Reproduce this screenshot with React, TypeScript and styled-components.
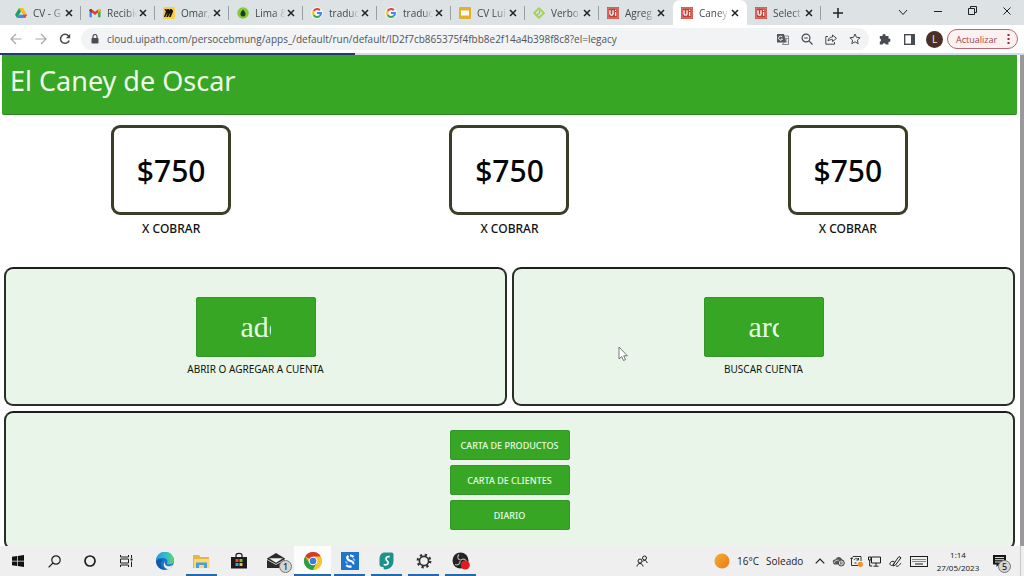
import React from "react";
import styled, { createGlobalStyle, css } from "styled-components";

const Global = createGlobalStyle`
  * { box-sizing: border-box; }
  body { margin: 0; background: #fff; font-family: "Noto Sans", "Open Sans", sans-serif; }
  button { font: inherit; color: inherit; border: 0; padding: 0; background: none; }
`;

const Shell = styled.div`
  display: flex;
  flex-direction: column;
  height: 100vh;
  overflow: hidden;
`;

/* ---------- browser chrome ---------- */

const TabStrip = styled.div`
  display: flex;
  flex: none;
  height: 25px;
  padding-left: 7px;
  background: #dde2e5;
  color: #1f2326;
`;

const TabItem = styled.div<{ $active?: boolean; $line?: boolean }>`
  position: relative;
  display: flex;
  align-items: center;
  flex: none;
  width: 74px;
  padding: 0 6px 0 8px;
  border-radius: 7px 7px 0 0;
  ${(p) => p.$active && css`background: #fff;`}
  ${(p) =>
    p.$line &&
    css`
      &::after {
        content: "";
        position: absolute;
        right: 0;
        top: 6px;
        height: 14px;
        width: 1px;
        background: #9a9fa3;
      }
    `}
`;

const TabButton = styled.button`
  display: flex;
  align-items: center;
  gap: 6px;
  width: 48px;
  flex: none;
`;

const TabLabel = styled.span`
  flex: 1;
  min-width: 0;
  white-space: nowrap;
  text-align: left;
  font-family: "Open Sans", sans-serif;
  font-size: 10px;
  line-height: 16px;
  color: #44494d;
  mask-image: linear-gradient(90deg, #000 65%, transparent 100%);
`;

const IconButton = styled.button<{ $w: number }>`
  display: flex;
  flex: none;
  align-items: center;
  justify-content: center;
  width: ${(p) => p.$w}px;
  height: 100%;
`;

const WindowControls = styled.div`
  display: flex;
  margin-left: auto;
`;

const Toolbar = styled.div`
  display: flex;
  flex: none;
  align-items: center;
  height: 28px;
  padding: 0 6px 0 4px;
  background: #fff;
  color: #45494d;
`;

const AddressBar = styled.div`
  display: flex;
  flex: 1;
  align-items: center;
  height: 22px;
  margin: 0 4px;
  padding: 0 2px 0 10px;
  border-radius: 11px;
  background: #f1f3f5;
`;

const AddressInput = styled.input`
  display: block;
  flex: 1;
  min-width: 0;
  height: 16px;
  margin: 0 0 0 8px;
  padding: 0;
  border: 0;
  outline: 0;
  background: none;
  font-family: "Open Sans", sans-serif;
  font-size: 10px;
  line-height: 16px;
  color: #505458;
`;

const Avatar = styled.span`
  display: grid;
  place-items: center;
  width: 17px;
  height: 17px;
  border-radius: 50%;
  background: #4c2e29;
  color: #efe6e4;
  font-size: 10px;
`;

const UpdateButton = styled.button`
  display: flex;
  align-items: center;
  justify-content: space-between;
  width: 71px;
  height: 20px;
  padding: 0 7px 0 8px;
  border: 1px solid #b5686e;
  border-radius: 10px;
  background: #fcf1f1;
  color: #a4434b;
  font-family: "Open Sans", sans-serif;
  font-size: 9px;
  white-space: nowrap;
`;

const LoadTrack = styled.div`
  flex: none;
  height: 2px;
  background: #cfdcea;
`;

const LoadBar = styled.div`
  height: 100%;
  background: #23377c;
`;

/* ---------- page ---------- */

const Viewport = styled.main`
  position: relative;
  display: flex;
  flex: 1;
  min-height: 0;
  overflow: hidden;
  background: #fff;
`;

const Page = styled.div`
  flex: 1;
  min-width: 0;
`;

const ScrollThumb = styled.div`
  flex: none;
  width: 4px;
  background: #999;
`;

const Banner = styled.header`
  height: 60px;
  margin: 0 3px 0 2px;
  padding: 6px 8px;
  border-bottom: 1px solid #2c8520;
  border-radius: 0 0 2px 2px;
  background: #37a625;
`;

const Title = styled.h1`
  margin: 0;
  font-size: 27px;
  line-height: 40px;
  font-weight: 400;
  color: #eefbe9;
`;

const Metrics = styled.section`
  display: grid;
  grid-template-columns: repeat(3, 1fr);
  margin: 0 3px 0 2px;
  padding: 10px 0 28px;
`;

const Metric = styled.div`
  display: flex;
  flex-direction: column;
  align-items: center;
  gap: 4px;
`;

const MetricValue = styled.div`
  display: grid;
  place-items: center;
  width: 120px;
  height: 90px;
  border: 3px solid #3b3d28;
  border-radius: 9px;
  font-size: 30px;
  font-weight: 500;
  color: #050505;
`;

const MetricLabel = styled.div`
  font-size: 12px;
  line-height: 20px;
  font-weight: 500;
  color: #111;
`;

const Panels = styled.section`
  display: grid;
  grid-template-columns: 1fr 1fr;
  gap: 5px;
  padding: 0 5px 0 4px;
`;

const Panel = styled.div<{ $wide?: boolean }>`
  display: flex;
  flex-direction: column;
  align-items: center;
  gap: ${(p) => (p.$wide ? 5 : 3)}px;
  min-height: 139px;
  padding-top: ${(p) => (p.$wide ? 17 : 28)}px;
  border: 2px solid #2a2e29;
  border-top-color: #1c1f1c;
  border-radius: 9px;
  background: #e9f5e9;
  ${(p) => p.$wide && css`grid-column: 1 / -1;`}
`;

const ActionButton = styled.button<{ $tall?: boolean }>`
  display: flex;
  align-items: center;
  justify-content: center;
  width: 120px;
  height: ${(p) => (p.$tall ? 60 : 30)}px;
  border: 1px solid #34952a;
  border-radius: 2px;
  background: #37a625;
  color: #e9fbe4;
  font-size: 9px;
  font-weight: 500;
`;

const Ligature = styled.span`
  width: 30px;
  overflow: hidden;
  text-align: left;
  font-family: "Liberation Serif", serif;
  font-size: 30px;
  line-height: 36px;
  font-weight: 400;
`;

const ActionLabel = styled.div`
  font-size: 10px;
  line-height: 18px;
  font-weight: 400;
  color: #10150f;
`;

const Pointer = styled.svg`
  position: absolute;
  left: 618px;
  top: 291px;
`;

/* ---------- taskbar ---------- */

const Taskbar = styled.footer`
  display: flex;
  flex: none;
  align-items: stretch;
  height: 30px;
  background: #efefef;
  color: #1d1d1d;
`;

const TaskGroup = styled.div`
  display: flex;
  margin-right: 2px;
`;

const TaskButton = styled.button<{ $w: number; $running?: boolean; $active?: boolean }>`
  position: relative;
  display: flex;
  flex: none;
  align-items: center;
  justify-content: center;
  width: ${(p) => p.$w}px;
  ${(p) => p.$active && css`background: #fcfcfc;`}
  ${(p) =>
    p.$running &&
    css`
      &::after {
        content: "";
        position: absolute;
        bottom: 0;
        left: ${p.$active ? 0 : 3}px;
        right: ${p.$active ? 0 : 3}px;
        height: 2px;
        background: #2468ad;
      }
    `}
`;

const Badge = styled.span`
  position: absolute;
  right: 2px;
  bottom: 3px;
  display: grid;
  place-items: center;
  width: 13px;
  height: 13px;
  border: 1px solid #777;
  border-radius: 50%;
  background: #d5d5d5;
  font-size: 9px;
  line-height: 9px;
  font-weight: 500;
`;

const Tray = styled.div`
  display: flex;
  margin: 0 3px 0 auto;
  padding-right: 7px;
  border-right: 1px solid #c8c8c8;
`;

const Weather = styled.button`
  display: flex;
  align-items: center;
  gap: 7px;
  width: 97px;
  margin-left: 60px;
  font-family: "Open Sans", sans-serif;
  font-size: 10px;
  white-space: nowrap;
`;

const Clock = styled.time`
  display: flex;
  flex-direction: column;
  align-items: center;
  justify-content: center;
  width: 54px;
  font-family: "Open Sans", sans-serif;
  font-size: 8px;
  line-height: 13px;
  color: #111;
`;

/* ---------- drawings ---------- */

type IconProps = { s?: number; h?: number; box?: string; sw?: number; children: React.ReactNode };

const Glyph = styled.svg`
  flex: none;
`;

const Line = ({ s = 12, h, box = "0 0 12 12", sw = 1, children }: IconProps) => (
  <Glyph width={s} height={h ?? s} viewBox={box} fill="none" stroke="currentColor" strokeWidth={sw} aria-hidden="true">
    {children}
  </Glyph>
);
const Art = ({ s = 12, h, box = "0 0 12 12", children }: IconProps) => (
  <Glyph width={s} height={h ?? s} viewBox={box} aria-hidden="true">
    {children}
  </Glyph>
);

const Drive = (
  <Art>
    <path d="M4 1h4l4 6.8H8z" fill="#f9bb18" />
    <path d="M4 1l2 3.4L2.1 11 0 7.8z" fill="#1fa260" />
    <path d="M4.1 7.8H12L10 11H2.1z" fill="#4285f4" />
    <path d="M9.9 7.8H12L10 11 8 7.8z" fill="#e94335" />
  </Art>
);
const Gmail = (
  <Art>
    <path d="M.5 3v7.2h2.4V5z" fill="#4285f4" />
    <path d="M11.5 3v7.2H9.1V5z" fill="#34a853" />
    <path d="M.5 3.4C.5 1.8 2 1.7 2.9 2.4L6 4.8l3.1-2.4c.9-.7 2.4-.6 2.4 1L6 7.9z" fill="#e03d32" />
    <path d="M9.1 2.4c.9-.7 2.4-.6 2.4 1V4L9.1 5.8z" fill="#fbbc04" />
    <path d="M.5 3.4c0-1.600 1.500-1.700 2.400-1v3.400L.5 4z" fill="#b8261d" />
  </Art>
);
const Miro = (
  <Art>
    <rect width="12" height="12" rx="1.5" fill="#f7cf45" />
    <path d="M1.500 2h1.800l.9 1.500L4 2h1.900l.9 1.500L6.700 2h2l1.500 2.100-2.400 6H6l1.500-4.900L5 10.100H3.300l1.500-4.900-2.500 4.900H.9l2-5.500z" fill="#17130a" />
  </Art>
);
const Lima = (
  <Art>
    <circle cx="6" cy="6" r="5.8" fill="#84cb36" />
    <path d="M6 2.500c1.500 2 2.500 2.800 2.500 4.400a2.500 2.500 0 0 1-5 0C3.500 5.300 4.500 4.500 6 2.500z" fill="#17401b" />
  </Art>
);
const Google = (
  <Line sw={2}>
    <circle cx="6" cy="6" r="6" fill="#f3f6f7" stroke="none" />
    <path d="M2.700 3.900A4 4 0 0 1 8.900 3.200" stroke="#ea4335" />
    <path d="M2.700 3.900a4 4 0 0 0 0 4.200" stroke="#fbbc05" />
    <path d="M2.700 8.100a4 4 0 0 0 5.900 1" stroke="#34a853" />
    <path d="M8.600 9.100A4 4 0 0 0 10 6H6" stroke="#4285f4" />
  </Line>
);
const Slides = (
  <Art>
    <rect width="12" height="12" rx="1" fill="#e2b12c" />
    <rect x="2" y="3.500" width="8" height="5" fill="#fff" />
  </Art>
);
const Verbo = (
  <Line sw={2}>
    <path d="M6 1.200L10.800 6 6 10.800 1.200 6z" stroke="#a5d554" strokeLinejoin="round" />
    <path d="M6.500 3.500v3L4 7.500" stroke="#84c13a" strokeWidth="1" />
  </Line>
);
const UiPath = (
  <Art>
    <rect width="12" height="12" fill="#c83e36" />
    <rect x="1" y="1" width="10" height="10" fill="none" stroke="#ecc0bb" strokeWidth=".6" />
    <path d="M3 3.200v3.500a1.500 1.500 0 0 0 3 0V3.200M8.600 5v4M8.600 2.700v1.200" stroke="#fff" strokeWidth="1.300" fill="none" />
  </Art>
);

const CloseX = (
  <Line s={8} box="0 0 8 8" sw={1.5}>
    <path d="M1 1l6 6M7 1L1 7" />
  </Line>
);

const tabs = [
  { icon: Drive, text: "CV - G" },
  { icon: Gmail, text: "Recibic" },
  { icon: Miro, text: "Omar," },
  { icon: Lima, text: "Lima &" },
  { icon: Google, text: "traduc" },
  { icon: Google, text: "traduc" },
  { icon: Slides, text: "CV Lui" },
  { icon: Verbo, text: "Verbo" },
  { icon: UiPath, text: "Agreg" },
  { icon: UiPath, text: "Caney", active: true },
  { icon: UiPath, text: "Select" },
];

const Edge = (
  <Art s={18} box="0 0 18 18">
    <defs>
      <linearGradient id="edgeTop" x1="0" x2="1">
        <stop offset="0" stopColor="#2599dc" />
        <stop offset=".6" stopColor="#36c0c4" />
        <stop offset="1" stopColor="#64d465" />
      </linearGradient>
    </defs>
    <circle cx="9" cy="9" r="9" fill="#1673c8" />
    <path d="M0 9a9 9 0 0 1 18-.8c.1 3-2 4.400-4.300 4.400-2 0-3.200-.7-2.700-1.600.8-1.400.6-4.200-2.400-4.800C5 5.500 1.200 7 0 9z" fill="url(#edgeTop)" />
    <path d="M9.500 8.500c-2.500 3 1 6.500 4.300 5.700 1.500-.3 2.500-1 3.200-1.600-1 2.200-2.700 4-4.500 4.700-4-.3-6.700-5-3-8.800z" fill="#eef3f7" />
    <path d="M6.500 8c-3 2.500-2 8 3 9.800C3 18 .2 13.500.1 9c1.400-2 4.400-3 6.400-1z" fill="#1359a5" />
  </Art>
);
const Folder = (
  <Art s={17} h={15} box="0 0 17 15">
    <path d="M0 1h6l1.500 2H16v11H0z" fill="#e9b440" />
    <path d="M1 5h15.500v9H1z" fill="#fbd978" />
    <path d="M3 14V8.500h11V14h-3v-3H6v3z" fill="#4b9ed6" />
  </Art>
);
const Store = (
  <Art s={18} box="0 0 18 18">
    <path d="M6 5V3.200C6 .8 12 .8 12 3.200V5" fill="none" stroke="#222" strokeWidth="1.300" />
    <path d="M1 5h16v11.500H1z" fill="#1b1b1b" />
    <path d="M5.500 7h3v3h-3z" fill="#ef5029" />
    <path d="M9.500 7h3v3h-3z" fill="#82bb27" />
    <path d="M5.500 11h3v3h-3z" fill="#2fa5e5" />
    <path d="M9.500 11h3v3h-3z" fill="#fbbd22" />
  </Art>
);
const Mail = (
  <Art s={18} h={16} box="0 0 18 16">
    <path d="M0 5.500L9 0l9 5.500V15H0z" fill="#2b2b2b" />
    <path d="M2 5.300h14L9 9.800z" fill="#f3f3f3" />
    <path d="M0 6.500l9 5 9-5" stroke="#efefef" strokeWidth=".8" fill="none" />
  </Art>
);
const Chrome = (
  <Art s={18} box="0 0 18 18">
    <circle cx="9" cy="9" r="9" fill="#f6c52e" />
    <path d="M9 9L1.200 4.500A9 9 0 0 1 16.800 4.500z" fill="#d9392d" />
    <path d="M1.200 4.500A9 9 0 0 0 9 18l3.500-7L5.500 11z" fill="#2c9e4b" />
    <path d="M9 4.500h7.800A9 9 0 0 1 9 18l4-7z" fill="#f6c52e" />
    <circle cx="9" cy="9" r="4.300" fill="#fff" />
    <circle cx="9" cy="9" r="3.300" fill="#3d7de0" />
  </Art>
);
const BlueS = (
  <Art s={18} box="0 0 18 18">
    <rect width="18" height="18" fill="#1e76cc" />
    <path d="M12.500 5c-1.300-1.700-3-1.500-3.500-1.500M7.500 4C5 5.500 6.500 8 9 8.700c2.500.7 3.800 1.800 3.300 3.500M10.500 14.200c-2 .8-4 .3-5.300-1" fill="none" stroke="#fff" strokeWidth="2.200" />
    <path d="M4.500 9.500l2 2M12 6.500l2 2" stroke="#8cc8f5" strokeWidth="1.500" />
  </Art>
);
const Shark = (
  <Art s={15} h={18} box="0 0 15 18">
    <path d="M6 .5h6.500c1.500 0 2 1 2 2.200v6C14.500 14 11 17 6 17.500c-1.500 0-1.500-1-1.500-2.500C2 15 .5 14.500.5 12.500V7C.5 3 2.500.5 6 .5z" fill="#1b928c" />
    <path d="M10.800 4.700C8.500 4.200 7 5 7 6.800c0 2.200 2.200 1.800 2.200 3.900 0 1.600-1.700 2.400-4.500 2" fill="none" stroke="#fff" strokeWidth="1.700" />
  </Art>
);
const Gear = (
  <Art s={16} box="0 0 16 16">
    <circle cx="8" cy="8" r="4.600" fill="none" stroke="#303030" strokeWidth="1.700" />
    <circle cx="8" cy="8" r="6.300" fill="none" stroke="#303030" strokeWidth="2.200" strokeDasharray="2.300 2.648" />
  </Art>
);
const Obs = (
  <Art s={18} box="0 0 18 18">
    <circle cx="8.500" cy="8.500" r="8" fill="#272325" />
    <path d="M8.500 8C5.500 7.500 5 4.500 7 2.500M8.500 8.500c2-2.500 5-1.500 6 1M8 9c.5 3-2 4.500-5 3.500" fill="none" stroke="#b8b4b6" strokeWidth="1.200" />
    <circle cx="13.300" cy="13" r="4.500" fill="#e01d1f" />
  </Art>
);

const running = [
  { name: "Edge", icon: Edge },
  { name: "Explorador", icon: Folder, running: true },
  { name: "Tienda", icon: Store },
  { name: "Correo", icon: Mail, badge: "1" },
  { name: "Chrome", icon: Chrome, running: true, active: true },
  { name: "Studio", icon: BlueS, running: true },
  { name: "Surfshark", icon: Shark, running: true },
  { name: "Ajustes", icon: Gear, running: true },
  { name: "OBS", icon: Obs, running: true },
];

export default function App() {
  return (
    <>
      <Global />
      <Shell>
        <TabStrip>
          {tabs.map((t, i) => (
            <TabItem key={i} $active={t.active} $line={!t.active && i !== 8}>
              <TabButton>
                {t.icon}
                <TabLabel>{t.text}</TabLabel>
              </TabButton>
              <IconButton $w={12} aria-label="Cerrar">{CloseX}</IconButton>
            </TabItem>
          ))}
          <IconButton $w={34} aria-label="Nueva pestaña">
            <Line s={10} box="0 0 10 10" sw={1.5}><path d="M5 0v10M0 5h10" /></Line>
          </IconButton>
          <WindowControls>
            <IconButton $w={35} aria-label="Buscar pestañas">
              <Line s={10} box="0 0 10 10"><path d="M1 2l4 4.500L9 2" /></Line>
            </IconButton>
            <IconButton $w={35} aria-label="Minimizar">
              <Line s={8} box="0 0 8 8"><path d="M0 2.500h8" /></Line>
            </IconButton>
            <IconButton $w={34} aria-label="Restaurar">
              <Line s={9} h={13} box="0 0 9 13"><path d="M.5 2.500h6v6h-6zM2.500 2V.5h6v6H7" /></Line>
            </IconButton>
            <IconButton $w={35} aria-label="Cerrar ventana">
              <Line s={8} h={12} box="0 0 8 12"><path d="M.5.5l7 7M7.500.5l-7 7" /></Line>
            </IconButton>
          </WindowControls>
        </TabStrip>

        <Toolbar>
          <IconButton $w={24} aria-label="Atrás">
            <Line sw={1.2}><path d="M11.500 6H1M6 1L1 6l5 5" stroke="#a5a8ab" /></Line>
          </IconButton>
          <IconButton $w={25} aria-label="Adelante">
            <Line sw={1.2}><path d="M.5 6H11M6 1l5 5-5 5" stroke="#a5a8ab" /></Line>
          </IconButton>
          <IconButton $w={24} aria-label="Recargar">
            <Line sw={1.5}><path d="M10.200 7.500A4.500 4.500 0 1 1 9.500 3L10.500 4.200" /><path d="M11.200.8v4.400H6.800z" fill="currentColor" stroke="none" /></Line>
          </IconButton>
          <AddressBar>
            <Art s={8} h={10} box="0 0 8 10">
              <path d="M2 4V2.500a2 2 0 0 1 4 0V4" fill="none" stroke="#4a4e52" strokeWidth="1.200" />
              <rect x=".5" y="4" width="7" height="5.500" rx=".8" fill="#4a4e52" />
            </Art>
            <AddressInput
              aria-label="Dirección"
              readOnly
              value="cloud.uipath.com/persocebmung/apps_/default/run/default/ID2f7cb865375f4fbb8e2f14a4b398f8c8?el=legacy"
            />
            <IconButton $w={24} aria-label="Traducir">
              <Art>
                <path d="M0 1h7l2.500 8.500H0z" fill="#53575b" />
                <path d="M7.800 3H11.500v8.500H5.500L7 9.500" fill="none" stroke="#777b7f" strokeWidth=".9" />
                <path d="M5.300 4A2 2 0 1 0 5.500 6H4" fill="none" stroke="#fff" />
                <path d="M7.500 5.500h3.500M9.500 5c0 2-.7 3-1.700 3.800M8 6c.5 1.500 1.500 2.500 2.500 3" fill="none" stroke="#777b7f" strokeWidth=".7" />
              </Art>
            </IconButton>
            <IconButton $w={24} aria-label="Zoom">
              <Line sw={1.2}><circle cx="5" cy="5" r="3.900" /><path d="M7.900 7.900l3.600 3.600M3.200 5h3.600" /></Line>
            </IconButton>
            <IconButton $w={24} aria-label="Compartir">
              <Line><path d="M3 3.500H.8v7.700h8.700V9M3 8c.3-2.700 2-4 4.500-4V2l4 3.300-4 3.300v-2C5.500 6.500 4 7 3 8z" /></Line>
            </IconButton>
            <IconButton $w={24} aria-label="Favorito">
              <Line><path d="M6 1l1.500 3.300 3.600.4-2.700 2.400.8 3.600L6 8.800l-3.200 1.900.8-3.600L.9 4.700l3.600-.4z" /></Line>
            </IconButton>
          </AddressBar>
          <IconButton $w={24} aria-label="Extensiones">
            <Art><path d="M.8 3h2.700a1.600 1.600 0 1 1 3.100 0H9.500v2.700a1.600 1.600 0 1 1 0 3.100v2.700H6.800a1.700 1.700 0 0 0-3.300 0H.8V8.700a1.600 1.600 0 0 0 0-3.100z" fill="#484c50" /></Art>
          </IconButton>
          <IconButton $w={25} aria-label="Panel lateral">
            <Art s={11} h={11} box="0 0 11 11"><rect x=".7" y=".7" width="9.600" height="9.600" fill="none" stroke="#484c50" strokeWidth="1.400" /><path d="M7 0h4v11H7z" fill="#484c50" /></Art>
          </IconButton>
          <IconButton $w={25} aria-label="Perfil"><Avatar>L</Avatar></IconButton>
          <UpdateButton>
            Actualizar
            <Art s={3} h={12} box="0 0 3 12"><path d="M.5 1h2v2h-2zM.5 5h2v2h-2zM.5 9h2v2h-2z" fill="#8c2e36" /></Art>
          </UpdateButton>
        </Toolbar>
        <LoadTrack><LoadBar style={{ width: `${(355 / 1024) * 100}%` }} /></LoadTrack>

        <Viewport>
          <Page>
            <Banner><Title>El Caney de Oscar</Title></Banner>
            <Metrics>
              {[0, 1, 2].map((i) => (
                <Metric key={i}>
                  <MetricValue>$750</MetricValue>
                  <MetricLabel>X COBRAR</MetricLabel>
                </Metric>
              ))}
            </Metrics>
            <Panels>
              <Panel>
                <ActionButton $tall aria-label="Abrir o agregar a cuenta"><Ligature>add</Ligature></ActionButton>
                <ActionLabel>ABRIR O AGREGAR A CUENTA</ActionLabel>
              </Panel>
              <Panel>
                <ActionButton $tall aria-label="Buscar cuenta"><Ligature>arc</Ligature></ActionButton>
                <ActionLabel>BUSCAR CUENTA</ActionLabel>
              </Panel>
              <Panel $wide>
                <ActionButton>CARTA DE PRODUCTOS</ActionButton>
                <ActionButton>CARTA DE CLIENTES</ActionButton>
                <ActionButton>DIARIO</ActionButton>
              </Panel>
            </Panels>
          </Page>
          <ScrollThumb />
          <Pointer width="10" height="16" viewBox="0 0 10 16" aria-hidden="true">
            <path d="M1 1v12l2.700-2.500L5.500 14.500l2-.9L5.700 9.800H9.300z" fill="#fff" stroke="#555" strokeWidth=".8" />
          </Pointer>
        </Viewport>

        <Taskbar>
          <TaskGroup>
            <TaskButton $w={36} aria-label="Inicio">
              <Art><path d="M0 1.700l5-.7v4.700H0zM5.700.9L12 0v5.700H5.700zM0 6.400h5V11l-5-.7zM5.700 6.400H12V12l-6.300-.9z" fill="#111" /></Art>
            </TaskButton>
            <TaskButton $w={36} aria-label="Buscar">
              <Line s={13} box="0 0 13 13" sw={1.2}><circle cx="8" cy="5" r="4.200" /><path d="M5 8L.6 12.400" /></Line>
            </TaskButton>
            <TaskButton $w={36} aria-label="Cortana">
              <Line sw={1.7}><circle cx="6" cy="6" r="5" /></Line>
            </TaskButton>
            <TaskButton $w={36} aria-label="Vista de tareas">
              <Line s={13} h={12} box="0 0 13 12"><path d="M.5 0v2h8V0M.5 12v-2h8v2M.5 4h8v4h-8zM11.500 0v3M11.500 6.500V12" /><path d="M10.500 3.500h2v2h-2z" fill="currentColor" stroke="none" /></Line>
            </TaskButton>
          </TaskGroup>
          {running.map((a) => (
            <TaskButton key={a.name} $w={37} $running={a.running} $active={a.active} aria-label={a.name}>
              {a.icon}
              {a.badge && <Badge>{a.badge}</Badge>}
            </TaskButton>
          ))}
          <Tray>
            <TaskButton $w={24} aria-label="Contactos">
              <Line><circle cx="8.500" cy="3" r="2" /><path d="M6.700 6.500c.8-1.600 4-1.500 4.500 1.500" /><circle cx="4" cy="6" r="2" /><path d="M1 11.500c.3-4 5.700-4 6 0" /></Line>
            </TaskButton>
            <Weather>
              <Art s={16} box="0 0 16 16">
                <defs><linearGradient id="sun" x1="0" y1="0" x2="1" y2="1"><stop offset="0" stopColor="#f5ae35" /><stop offset="1" stopColor="#e97a16" /></linearGradient></defs>
                <circle cx="8" cy="8" r="7.500" fill="url(#sun)" />
              </Art>
              <span>16°C</span>
              <span>Soleado</span>
            </Weather>
            <TaskButton $w={18} aria-label="Mostrar iconos ocultos">
              <Line s={10} h={6} box="0 0 10 6" sw={1.2}><path d="M.7 5.400L5 1l4.300 4.400" /></Line>
            </TaskButton>
            <TaskButton $w={18} aria-label="Nube">
              <Art s={13} h={12} box="0 0 13 12"><path d="M1 7.500C0 5 2.500 4 3.500 4.500 4.500 1 9 1 10 4.500c2.500 0 3 4 0 5H3C2 9.500 1 9 1 7.500z" fill="#555" /><path d="M2 8c1-3 4-3.500 7-2" stroke="#ddd" fill="none" /><circle cx="9.300" cy="8" r="3" fill="#ddd" stroke="#444" /><path d="M8.600 6.500v3M10 6.500v3" stroke="#444" strokeWidth=".7" /></Art>
            </TaskButton>
            <TaskButton $w={18} aria-label="Actualización">
              <Art s={13} h={12} box="0 0 13 12"><path d="M11 6V1.500H3L1.500 3v7.500H8M.3 3.500h2.500M4 5c1-2 3.500-2 4.500 0M8.500 3v2h-2M4.500 8h2" stroke="#333" fill="none" /><circle cx="10.300" cy="9.300" r="2.600" fill="#f09324" /></Art>
            </TaskButton>
            <TaskButton $w={19} aria-label="Red">
              <Line s={13} box="0 0 13 12"><path d="M3.500 1.500h9v6h-9zM8 7.500v3M5.500 10.700h5M.5 1.500h2.500v3H.5zM1.700 4.500v6h2.500" /></Line>
            </TaskButton>
            <TaskButton $w={23} aria-label="Lápiz">
              <Line s={13} box="0 0 13 12"><path d="M4.500 8.500L10 1l2 1.300L6.500 9.500l-2.300 1zM5 6C2 5 0 8 1.500 9.500S5 9 6 6M7 10.500c2 1 3.500-1 5-3" /></Line>
            </TaskButton>
            <TaskButton $w={24} aria-label="Teclado">
              <Line s={18} h={11} box="0 0 18 11"><rect x=".5" y=".5" width="17" height="10" /><path d="M2.500 3.500h13M2.500 5.500h13" strokeDasharray="1 1" /><path d="M5 8h8" /></Line>
            </TaskButton>
            <Clock><span>1:14</span><span>27/05/2023</span></Clock>
            <TaskButton $w={28} aria-label="Notificaciones">
              <Art s={13} h={13} box="0 0 13 13"><path d="M0 0h13v9.500H6L3.500 12V9.500H0z" fill="#171717" /><path d="M2 2.500h9M2 4.700h9M2 7h6" stroke="#efefef" strokeWidth=".9" /></Art>
              <Badge>5</Badge>
            </TaskButton>
          </Tray>
        </Taskbar>
      </Shell>
    </>
  );
}
